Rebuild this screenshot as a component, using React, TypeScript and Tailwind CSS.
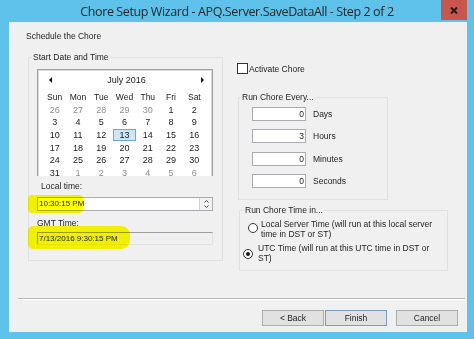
import React from 'react';

const dayNames = ['Sun', 'Mon', 'Tue', 'Wed', 'Thu', 'Fri', 'Sat'];

const days: { n: number; cur: boolean }[] = [
  ...[26, 27, 28, 29, 30].map(n => ({ n, cur: false })),
  ...Array.from({ length: 31 }, (_, i) => ({ n: i + 1, cur: true })),
  ...[1, 2, 3, 4, 5, 6].map(n => ({ n, cur: false })),
];

function Calendar() {
  return (
    <div className="ml-[8px] mt-[7px] w-[176px] h-[107px] shrink-0 overflow-hidden bg-white border-t border-x border-[#a0a0a0]">
      <div className="h-full border-t border-x border-[#dadada]">
        <div className="h-[20px] flex items-start justify-between pl-[10px] pr-[7px] pt-[4px]">
          <svg width="3" height="6" viewBox="0 0 3 6" className="mt-[2px]"><path d="M3 0 L0 3 L3 6 Z" fill="#111" /></svg>
          <span className="text-[9px] leading-[10px] text-[#1a1a1a]">July 2016</span>
          <svg width="3" height="6" viewBox="0 0 3 6" className="mt-[2px]"><path d="M0 0 L3 3 L0 6 Z" fill="#111" /></svg>
        </div>
        <div className="grid grid-cols-7 w-[163px] ml-[4px]">
          {dayNames.map(d => (
            <div key={d} className="h-[12.6px] flex items-center justify-center text-[8.5px] text-[#1a1a1a]">{d}</div>
          ))}
          {days.map((d, i) => (
            <div key={i} className="h-[12.6px] flex items-center justify-center text-[9px]">
              {d.cur && d.n === 13 ? (
                <div className="w-full h-[11.5px] flex items-center justify-center bg-[#cce6fa] border border-[#6fa6d8] text-[#1a1a1a]">13</div>
              ) : (
                <span className={d.cur ? 'text-[#1a1a1a]' : 'text-[#8e8e8e]'}>{d.n}</span>
              )}
            </div>
          ))}
        </div>
      </div>
    </div>
  );
}

function LeftGroup() {
  return (
    <div className="relative ml-[19px] w-[195px] h-[204px] shrink-0 border border-[#e0e0e0] flex flex-col">
      <div className="-mt-[6px] ml-[3px] w-fit px-[1px] bg-[#f0f0f0]">Start Date and Time</div>
      <Calendar />
      <div className="mt-[5px] ml-[12px]">Local time:</div>
      <div className="ml-[8px] mt-[6px] w-[176px] h-[14px] shrink-0 bg-white border border-[#a9abb0] flex">
        <div className="flex-1 pl-[1px] leading-[12px] text-[8px]">10:30:15 PM</div>
        <div className="w-[13px] h-full border-l border-[#d0d0d0] bg-[#f2f2f2] flex flex-col items-center justify-center gap-[2px]">
          <svg width="5" height="3" viewBox="0 0 5 3"><path d="M0.5 2.5 L2.5 0.5 L4.5 2.5" stroke="#444" fill="none" strokeWidth="1" /></svg>
          <svg width="5" height="3" viewBox="0 0 5 3"><path d="M0.5 0.5 L2.5 2.5 L4.5 0.5" stroke="#444" fill="none" strokeWidth="1" /></svg>
        </div>
      </div>
      <div className="mt-[7px] ml-[8px]">GMT Time:</div>
      <div className="ml-[8px] mt-[4px] w-[176px] h-[13px] shrink-0 border-t border-l border-[#9c9c9c] border-r border-b border-r-[#e2e2e2] border-b-[#e2e2e2] pl-[1px] leading-[11px] text-[8px]">
        7/13/2016 9:30:15 PM
      </div>
      <div className="absolute left-[-1px] top-[137px] w-[55px] h-[18px] bg-[#ffff00] mix-blend-multiply rounded-[4px]" />
      <div className="absolute left-[-1px] top-[168px] w-[102px] h-[23px] bg-[#ffff00] mix-blend-multiply rounded-l-[5px] rounded-r-[9px]" />
    </div>
  );
}

function NumberRow({ value, label }: { value: string; label: string }) {
  return (
    <div className="h-[14px] flex items-center">
      <div className="ml-[13px] w-[54px] h-[14px] bg-white border border-[#a9abb0] text-right pr-[1px] leading-[12px]">{value}</div>
      <div className="ml-[7px]">{label}</div>
    </div>
  );
}

function Radio({ checked }: { checked?: boolean }) {
  return (
    <div className="w-[10px] h-[10px] shrink-0 rounded-full border border-[#333] bg-white flex items-center justify-center">
      {checked && <div className="w-[4px] h-[4px] rounded-full bg-[#1a1a1a]" />}
    </div>
  );
}

function RightCol() {
  return (
    <div className="ml-[14px] w-[211px] flex flex-col">
      <div className="mt-[6px] h-[11px] flex items-center">
        <div className="w-[11px] h-[11px] border border-[#333] bg-white" />
        <div className="ml-[1px]">Activate Chore</div>
      </div>
      <div className="mt-[23px] ml-[1px] w-[150px] h-[103px] border border-[#e0e0e0] flex flex-col">
        <div className="-mt-[6px] ml-[2px] w-fit px-[1px] bg-[#f0f0f0]">Run Chore Every...</div>
        <div className="mt-[5px] flex flex-col gap-[8.4px]">
          <NumberRow value="0" label="Days" />
          <NumberRow value="3" label="Hours" />
          <NumberRow value="0" label="Minutes" />
          <NumberRow value="0" label="Seconds" />
        </div>
      </div>
      <div className="mt-[10px] ml-[2px] w-[209px] h-[61px] border border-[#e0e0e0] flex flex-col">
        <div className="-mt-[6px] ml-[4px] w-fit px-[1px] bg-[#f0f0f0]">Run Chore Time in...</div>
        <div className="mt-[4px] flex items-start">
          <div className="ml-[8px] mt-[4px]"><Radio /></div>
          <div className="ml-[3px]">Local Server Time (will run at this local server<br />time in DST or ST)</div>
        </div>
        <div className="mt-[4px] flex items-start">
          <div className="ml-[3px] mt-[6px]"><Radio checked /></div>
          <div className="ml-[5px]">UTC Time (will run at this UTC time in DST or<br />ST)</div>
        </div>
      </div>
    </div>
  );
}

export default function App() {
  return (
    <div className="w-[474px] h-[339px] bg-[#5ec2ea] flex flex-col overflow-hidden font-['Liberation_Sans',Arial,sans-serif]">
      <div className="h-[22px] shrink-0 grid grid-cols-[1fr_auto_1fr]">
        <div />
        <div className="font-['Open_Sans',sans-serif] text-[12.5px] tracking-[-0.4px] leading-[23px] text-[#262626] whitespace-nowrap">
          Chore Setup Wizard - APQ.Server.SaveDataAll - Step 2 of 2
        </div>
        <div className="flex justify-end pr-[7px]">
          <div className="w-[26px] h-[20px] bg-[#c9564e] flex items-center justify-center">
            <svg width="8" height="7" viewBox="0 0 8 7"><path d="M1 0.5 L7 6.5 M7 0.5 L1 6.5" stroke="#2a1a18" strokeWidth="2" /></svg>
          </div>
        </div>
      </div>
      <div className="ml-[9px] mr-[7px] h-[310px] shrink-0 bg-[#f0f0f0] flex flex-col text-[8.5px] leading-[10px] text-[#1e1e1e]">
        <div className="ml-[17px] mt-[9px]">Schedule the Chore</div>
        <div className="flex mt-[16px]">
          <LeftGroup />
          <RightCol />
        </div>
        <div className="mt-auto ml-[9px] mr-[2px] h-[1px] bg-[#b4b4b4]" />
        <div className="ml-[9px] mr-[2px] h-[1px] bg-white" />
        <div className="flex justify-end pr-[9px] mt-[10px] mb-[6px]">
          <button className="w-[62px] h-[16px] bg-[#e1e1e1] border border-[#adadad] leading-[14px]">&lt; Back</button>
          <button className="ml-[1px] w-[62px] h-[16px] bg-[#e1e1e1] border border-[#7a9cc6] leading-[14px]">Finish</button>
          <button className="ml-[9px] w-[62px] h-[16px] bg-[#e1e1e1] border border-[#adadad] leading-[14px]">Cancel</button>
        </div>
      </div>
    </div>
  );
}
